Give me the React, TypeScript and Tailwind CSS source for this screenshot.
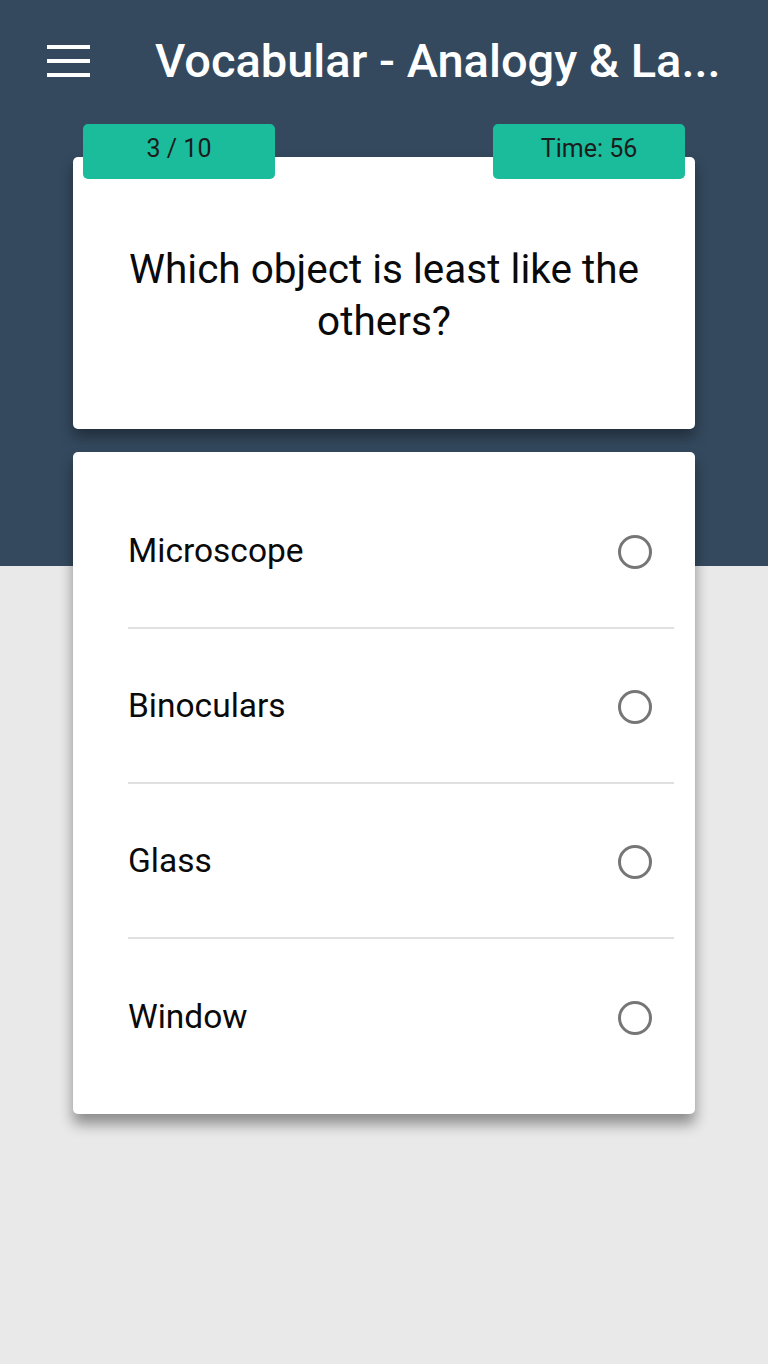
import React from "react";

const options = ["Microscope", "Binoculars", "Glass", "Window"];

function Radio() {
  return (
    <svg width="36" height="36" viewBox="0 0 36 36" className="shrink-0">
      <circle cx="18" cy="18" r="15.5" fill="none" stroke="#767676" strokeWidth="3" />
    </svg>
  );
}

export default function App() {
  return (
    <div
      className="min-h-[1364px] w-full bg-[linear-gradient(to_bottom,#34495e_566px,#e9e9e9_566px)]"
      style={{ fontFamily: "Roboto, 'Noto Sans', sans-serif" }}
    >
      <header className="flex h-[121px] items-center pl-[47px] pr-4 text-white">
        <div className="flex w-[43px] flex-col gap-[10px]">
          <span className="block h-[4px] w-full bg-white" />
          <span className="block h-[4px] w-full bg-white" />
          <span className="block h-[4px] w-full bg-white" />
        </div>
        <h1 className="ml-[65px] whitespace-nowrap text-[47px] font-medium leading-none">
          Vocabular - Analogy &amp; La...
        </h1>
      </header>

      <main className="mx-[73px] mt-[36px] flex flex-col gap-[23px]">
        <section className="relative rounded-[5px] bg-white px-[36px] pb-[82px] pt-[86px] shadow-[0_8px_14px_rgba(0,0,0,0.38)]">
          <div className="absolute -top-[33px] left-[10px] flex h-[55px] w-[192px] items-center justify-center rounded-[5px] bg-[#1abc9c] pb-[6px] text-[25px] text-[#1c1c1c]">
            3 / 10
          </div>
          <div className="absolute -top-[33px] right-[10px] flex h-[55px] w-[192px] items-center justify-center rounded-[5px] bg-[#1abc9c] pb-[6px] text-[25px] text-[#1c1c1c]">
            Time: 56
          </div>
          <p className="text-center text-[40.5px] leading-[52px] text-[#0a0a0a]">
            Which object is least like the others?
          </p>
        </section>

        <section className="rounded-[5px] bg-white pb-[20px] pt-[22px] shadow-[0_10px_14px_rgba(0,0,0,0.4)]">
          {options.map((o, i) => (
            <div
              key={o}
              className={`ml-[55px] mr-[21px] flex h-[155px] items-center justify-between pt-[2px] ${
                i < options.length - 1 ? "border-b-2 border-[#e0e0e0]" : ""
              }`}
            >
              <span className="text-[33.5px] text-[#0a0a0a]">{o}</span>
              <span className="mr-[21px] flex">
                <Radio />
              </span>
            </div>
          ))}
        </section>
      </main>
    </div>
  );
}
